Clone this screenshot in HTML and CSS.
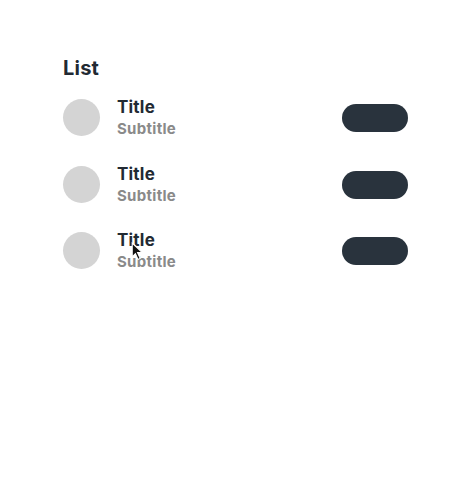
FILE: index.html
```html
<!DOCTYPE html>
<html>
<head>
<meta charset="utf-8">
<link rel="stylesheet" href="styles.css">
</head>
<body>
<div class="page">
  <h1 class="heading">List</h1>
  <ul class="list">
    <li class="row">
      <div class="avatar"></div>
      <div class="text"><div class="title">Title</div><div class="subtitle">Subtitle</div></div>
      <div class="pill"></div>
    </li>
    <li class="row">
      <div class="avatar"></div>
      <div class="text"><div class="title">Title</div><div class="subtitle">Subtitle</div></div>
      <div class="pill"></div>
    </li>
    <li class="row">
      <div class="avatar"></div>
      <div class="text"><div class="title">Title</div><div class="subtitle">Subtitle</div></div>
      <div class="pill"></div>
    </li>
  </ul>
</div>
<svg class="cursor" width="13" height="19" viewBox="0 0 12 18">
  <path d="M1 1 L1 14 L4 11 L6.5 16.5 L8.5 15.5 L6 10 L10.5 10 Z" fill="#111" stroke="#fff" stroke-width="1"/>
</svg>
</body>
</html>
```
FILE: styles.css
```css
html, body {
  margin: 0;
  padding: 0;
  background: #fff;
}
body {
  font-family: Inter, "Noto Sans", sans-serif;
  color: #222a33;
  position: relative;
  width: 474px;
  height: 488px;
  overflow: hidden;
}
.page {
  padding: 56px 0 0 63px;
  width: 345px;
}
.heading {
  margin: 0 0 19px 0;
  font-size: 20px;
  line-height: 24px;
  font-weight: 700;
  letter-spacing: 0.2px;
}
.list {
  list-style: none;
  margin: 0;
  padding: 0;
  display: flex;
  flex-direction: column;
  gap: 29.5px;
}
.row {
  display: flex;
  align-items: flex-start;
  height: 37px;
}
.avatar {
  width: 37px;
  height: 37px;
  border-radius: 50%;
  background: #d4d4d4;
  flex: none;
}
.text {
  margin-left: 17px;
  margin-top: -2px;
  flex: 1;
  display: flex;
  flex-direction: column;
}
.title {
  font-size: 17px;
  line-height: 20px;
  font-weight: 700;
  color: #222a33;
  letter-spacing: 0.2px;
}
.subtitle {
  margin-top: 2px;
  font-size: 15px;
  line-height: 20px;
  font-weight: 700;
  color: #8a8a8a;
  letter-spacing: 0.3px;
}
.pill {
  margin-top: 5px;
  width: 66px;
  height: 28px;
  border-radius: 14px;
  background: #29333d;
  flex: none;
}
.cursor {
  position: absolute;
  left: 131px;
  top: 242px;
}
```
